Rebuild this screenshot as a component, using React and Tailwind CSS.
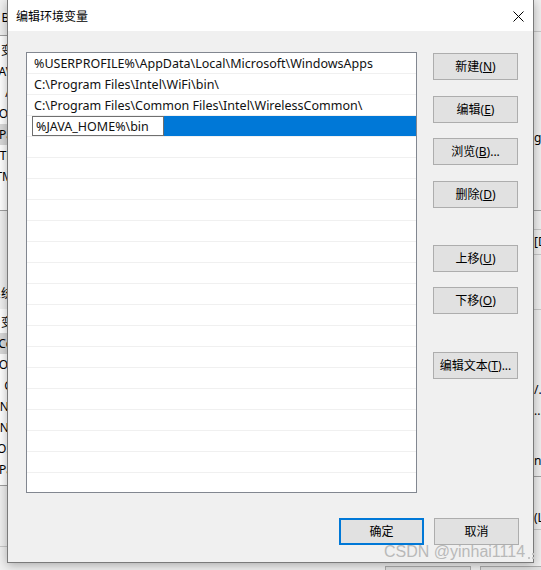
const rows = [
  '%USERPROFILE%\\AppData\\Local\\Microsoft\\WindowsApps',
  'C:\\Program Files\\Intel\\WiFi\\bin\\',
  'C:\\Program Files\\Common Files\\Intel\\WirelessCommon\\',
];

const sideButtons = [
  { label: '新建', key: 'N', gap: 'mt-[1px]' },
  { label: '编辑', key: 'E', gap: 'mt-[16px]' },
  { label: '浏览', key: 'B', gap: 'mt-[15px]', dots: true },
  { label: '删除', key: 'D', gap: 'mt-[16px]' },
  { label: '上移', key: 'U', gap: 'mt-[37px]' },
  { label: '下移', key: 'O', gap: 'mt-[15px]' },
  { label: '编辑文本', key: 'T', gap: 'mt-[38px]', dots: true },
];

const topList = [
  { t: '变', sel: false },
  { t: 'AV', sel: false },
  { t: 'A', sel: false },
  { t: 'Or', sel: false },
  { t: 'Pa', sel: true },
  { t: 'TE', sel: false },
  { t: 'TM', sel: false },
];

const sysList = ['变', 'Co', 'Or', 'G', 'NI', 'NI', 'OS', 'Pa'];

function Btn({ children, primary, className = '' }) {
  return (
    <div
      className={`w-[85px] h-[27px] flex items-center justify-center bg-[#e1e1e1] text-[12px] text-black ${
        primary ? 'border-2 border-[#0078d7]' : 'border border-[#adadad]'
      } ${className}`}
    >
      {children}
    </div>
  );
}

// text of the window behind, cut by the dialog's edge
function Cut({ children, sel, right }) {
  return (
    <div className={`h-[21px] flex items-center overflow-hidden ${right ? 'justify-start' : 'justify-end'} ${sel ? 'bg-[#d9d9d9]' : ''}`}>
      <span className={`whitespace-nowrap text-[12px] leading-none ${right ? '' : 'mr-[-5px]'}`}>{children}</span>
    </div>
  );
}

function BackWindow() {
  return (
    <div className="absolute inset-0 flex justify-between bg-[#f0f0f0]">
      <div className="w-[8px] flex flex-col">
        <div className="h-[35px] pt-[7px]">
          <Cut>B(</Cut>
        </div>
        <div className="h-[176px] bg-white border-t border-b border-[#a0a0a0] pt-[4px]">
          {topList.map((r, i) => (
            <Cut key={i} sel={r.sel}>{r.t}</Cut>
          ))}
        </div>
        <div className="h-[98px] pt-[72px]">
          <Cut>系统</Cut>
        </div>
        <div className="h-[177px] bg-white border-b border-[#a0a0a0] pt-[3px]">
          {sysList.map((t, i) => (
            <Cut key={i} sel={i === 1}>{t}</Cut>
          ))}
        </div>
        <div className="h-[61px] border-b border-[#c8c8c8]" />
      </div>

      <div className="w-[7px] flex flex-col">
        <div className="h-[32px] border-b border-[#c8c8c8]" />
        <div className="h-[178px] pt-[95px]">
          <Cut right>g</Cut>
        </div>
        <div className="h-[19px] border-t border-[#a0a0a0]" />
        <div className="h-[26px] border-t border-b border-[#c8c8c8] flex flex-col justify-center">
          <Cut right>[D</Cut>
        </div>
        <div className="h-[55px] border-b border-[#c8c8c8]" />
        <div className="h-[167px] border-b border-[#a0a0a0] pt-[69px]">
          <Cut right>/...</Cut>
          <Cut right>...</Cut>
          <div className="h-[29px]" />
          <Cut right>n...</Cut>
        </div>
        <div className="h-[53px] border-b border-[#c8c8c8] pt-[30px]">
          <Cut right>(L</Cut>
        </div>
      </div>

      {/* buttons of the back window peeking below the dialog */}
      <div className="absolute left-[385px] top-[566px] flex gap-[9px]">
        <div className="w-[86px] h-[20px] bg-[#e1e1e1] border border-[#adadad]" />
        <div className="w-[86px] h-[20px] bg-[#e1e1e1] border border-[#adadad]" />
      </div>
    </div>
  );
}

export default function App() {
  return (
    <div className="relative w-[541px] h-[570px] overflow-hidden font-['Noto_Sans','Noto_Sans_CJK_SC',sans-serif] text-[12px] text-black">
      <BackWindow />

      <div className="absolute left-[7px] top-0 w-[527px] h-[563px] flex flex-col bg-[#f0f0f0] border border-t-0 border-[#7a7a7a] shadow-[0_2px_10px_rgba(0,0,0,0.3)]">
        {/* title bar */}
        <div className="h-[31px] shrink-0 flex items-center justify-between bg-white pl-[8px] pr-[9px]">
          <span className="text-[12px] leading-none font-['Noto_Sans_CJK_SC',sans-serif]">编辑环境变量</span>
          <svg width="11" height="11" viewBox="0 0 11 11" className="mt-[1px]">
            <path d="M0.5 0.5 L10.5 10.5 M10.5 0.5 L0.5 10.5" stroke="#000" strokeWidth="1" fill="none" />
          </svg>
        </div>

        {/* list + side buttons */}
        <div className="flex pl-[18px] pt-[21px]">
          <div className="w-[391px] h-[441px] bg-white border border-[#828790] overflow-hidden">
            {rows.map((r) => (
              <div key={r} className="h-[21px] border-b border-[#f0f0f0] pl-[7px] pt-[3px] flex items-center whitespace-nowrap text-[12.5px] leading-none text-[#111]">
                {r}
              </div>
            ))}
            <div className="h-[21px] border-b border-[#f0f0f0] flex pl-[5px]">
              <div className="w-[132px] h-[20px] border border-[#6f6f6f] bg-white pl-[3px] pt-[3px] flex items-center text-[12.5px] leading-none whitespace-nowrap text-[#111]">
                %JAVA_HOME%\bin
              </div>
              <div className="flex-1 bg-[#0078d7]" />
            </div>
            {Array.from({ length: 17 }).map((_, i) => (
              <div key={i} className="h-[21px] border-b border-[#f0f0f0]" />
            ))}
          </div>

          <div className="flex flex-col ml-[16px]">
            {sideButtons.map((b) => (
              <Btn key={b.label} className={b.gap}>
                {b.label}(<u>{b.key}</u>){b.dots ? '...' : ''}
              </Btn>
            ))}
          </div>
        </div>

        {/* footer */}
        <div className="flex justify-end gap-[10px] pt-[25px] pr-[14px]">
          <Btn primary>确定</Btn>
          <Btn>取消</Btn>
        </div>
      </div>

      {/* watermark */}
      <div className="absolute left-[384px] top-[542px] flex items-center gap-[2px]">
        <span className="text-[16px] leading-[20px] font-['Liberation_Sans',Arial,sans-serif] text-[#b9b9b9] whitespace-nowrap">
          CSDN @yinhai1114
        </span>
        <svg width="8" height="8" viewBox="0 0 8 8" className="mt-[8px]">
          <rect x="5" y="1" width="2" height="2" fill="#c4c4c4" />
          <rect x="1" y="5" width="2" height="2" fill="#c4c4c4" />
          <rect x="5" y="5" width="2" height="2" fill="#c4c4c4" />
        </svg>
      </div>
    </div>
  );
}
